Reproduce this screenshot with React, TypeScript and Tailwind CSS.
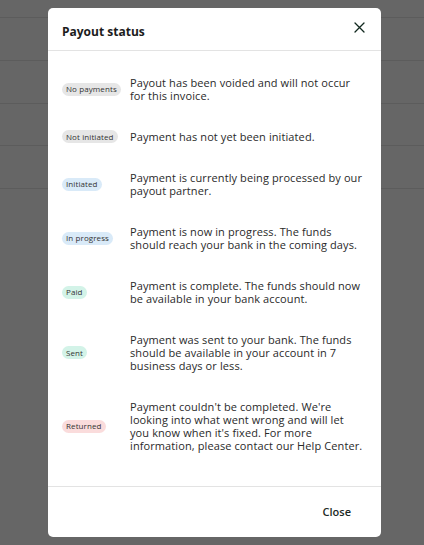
import React from "react";

type Row = {
  label: string;
  badge: string;
  lines: string[];
};

const rows: Row[] = [
  {
    label: "No payments",
    badge: "bg-[#e6e6e6]",
    lines: ["Payout has been voided and will not occur", "for this invoice."],
  },
  {
    label: "Not initiated",
    badge: "bg-[#e6e6e6]",
    lines: ["Payment has not yet been initiated."],
  },
  {
    label: "Initiated",
    badge: "bg-[#d9eaf8]",
    lines: ["Payment is currently being processed by our", "payout partner."],
  },
  {
    label: "In progress",
    badge: "bg-[#d9eaf8]",
    lines: ["Payment is now in progress. The funds", "should reach your bank in the coming days."],
  },
  {
    label: "Paid",
    badge: "bg-[#d3f3e8]",
    lines: ["Payment is complete. The funds should now", "be available in your bank account."],
  },
  {
    label: "Sent",
    badge: "bg-[#d3f3e8]",
    lines: [
      "Payment was sent to your bank. The funds",
      "should be available in your account in 7",
      "business days or less.",
    ],
  },
  {
    label: "Returned",
    badge: "bg-[#fadcdc]",
    lines: [
      "Payment couldn't be completed. We're",
      "looking into what went wrong and will let",
      "you know when it's fixed. For more",
      "information, please contact our Help Center.",
    ],
  },
];

export default function App() {
  return (
    <div className="relative h-[545px] w-[424px] overflow-hidden bg-[#666666] font-['Open_Sans',sans-serif]">
      {/* page behind the overlay */}
      <div className="flex flex-col">
        <div className="h-[18px] border-b border-[#5c5c5c]" />
        <div className="h-[43px] border-b border-[#5c5c5c]" />
        <div className="h-[43px] border-b border-[#5c5c5c]" />
        <div className="h-[42px] border-b border-[#5c5c5c]" />
        <div className="h-[43px] border-b border-[#5c5c5c]" />
      </div>

      {/* dialog */}
      <div className="absolute left-[48px] top-[8px] flex h-[529px] w-[333px] flex-col rounded-[5px] bg-white text-[#222]">
        <div className="flex h-[43px] items-center justify-between border-b border-[#e3e3e3] pl-[14px] pr-[14px]">
          <h2 className="mt-[5px] text-[12px] font-bold leading-[16px] text-[#1c1c1c]">Payout status</h2>
          <button className="mb-[3px] flex h-4 w-4 items-center justify-center text-[#12291f]">
            <svg width="11" height="11" viewBox="0 0 11 11" fill="none">
              <path d="M1 1L10 10M10 1L1 10" stroke="currentColor" strokeWidth="1.3" strokeLinecap="round" />
            </svg>
          </button>
        </div>

        <div className="flex flex-1 flex-col gap-[28px] pl-[14px] pr-[12px] pt-[25px]">
          {rows.map((r) => (
            <div key={r.label} className="flex items-center">
              <div className="flex w-[68px] shrink-0 leading-none">
                <span
                  className={`inline-flex h-[13px] items-center rounded-full px-[4px] text-[8px] leading-none tracking-[0.1px] text-[#333] ${r.badge}`}
                >
                  {r.label}
                </span>
              </div>
              <p className="text-[11px] leading-[13px] tracking-[0.1px] text-[#2a2a2a]">
                {r.lines.map((l, i) => (
                  <span key={i} className="block whitespace-nowrap">
                    {l}
                  </span>
                ))}
              </p>
            </div>
          ))}
        </div>

        <div className="flex h-[51px] items-center justify-end border-t border-[#e3e3e3] pr-[18px]">
          <button className="px-3 py-1 text-[11px] font-semibold leading-[14px] text-[#1c2a25]">Close</button>
        </div>
      </div>
    </div>
  );
}
